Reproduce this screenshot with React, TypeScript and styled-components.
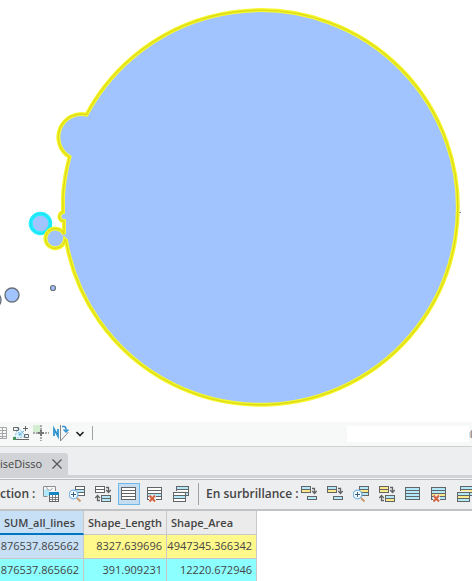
import React from 'react';
import styled, { createGlobalStyle } from 'styled-components';

const GlobalStyle = createGlobalStyle`
  * { box-sizing: border-box; }
  body {
    margin: 0;
    background: #fff;
    color: #444;
    font-family: 'Open Sans', 'Noto Sans', sans-serif;
    font-size: 12px;
    overflow: hidden;
  }
  button, input { font: inherit; color: inherit; }
`;

const Page = styled.main`
  display: flex;
  flex-direction: column;
`;

const MapView = styled.svg`
  display: block;
  width: 100%;
  height: auto;
`;

const StatusBar = styled.div`
  display: flex;
  align-items: center;
  height: 24px;
  background: #f7f8f8;
  overflow: hidden;
`;

const StatusTools = styled.div`
  display: flex;
  flex: 1;
  align-items: center;
  gap: 4px;
  padding-bottom: 2px;
`;

const IconButton = styled.button<{ $size?: number; $active?: boolean }>`
  display: flex;
  flex: none;
  align-items: center;
  justify-content: center;
  width: ${(p) => p.$size ?? 22}px;
  height: ${(p) => p.$size ?? 22}px;
  padding: 0;
  border: 1px solid ${(p) => (p.$active ? '#6cb8e8' : 'transparent')};
  background: ${(p) => (p.$active ? '#c5dcf1' : 'transparent')};

  svg { flex: none; display: block; }
`;

const Divider = styled.span<{ $height: number }>`
  flex: none;
  width: 1px;
  height: ${(p) => p.$height}px;
  background: #a0a1a3;
`;

const StatusField = styled.input`
  flex: none;
  width: 122px;
  height: 16px;
  padding: 0 4px;
  border: 0;
  background: #fff;
`;

const StatusEdge = styled.svg`
  flex: none;
  width: 3px;
  height: 16px;
`;

const TabStrip = styled.div`
  display: flex;
  align-items: flex-end;
  height: 29px;
  border-top: 1px solid #d0d1d3;
  background: #edeef0;
`;

const Tab = styled.div`
  display: flex;
  align-items: center;
  gap: 8px;
  height: 22px;
  padding-right: 4px;
  border-radius: 0 3px 0 0;
  background: #d1d3d6;
`;

const TabTitle = styled.button`
  padding: 0;
  border: 0;
  background: none;
  line-height: 20px;
  font-size: 11px;
`;

const PanelEdge = styled.div`
  height: 5px;
  border-top: 3px solid #d1d3d6;
  border-bottom: 1px solid #b9babd;
  background: #f5f5f6;
`;

const TableToolbar = styled.div`
  display: flex;
  align-items: center;
  gap: 4px;
  height: 31px;
  padding-bottom: 1px;
  border-bottom: 2px solid #c1c2c4;
  background: #edeef0;
  overflow: hidden;
`;

const ToolLabel = styled.span<{ $width: number }>`
  flex: none;
  width: ${(p) => p.$width}px;
  font-size: 12px;
  font-weight: 600;
  line-height: 20px;
  white-space: nowrap;
`;

const ToolDivider = styled(Divider)`
  margin: 0 3px 0 2px;
`;

const Table = styled.table`
  width: 257px;
  table-layout: fixed;
  border-collapse: separate;
  border-spacing: 0;
  font-size: 11px;
  line-height: 16px;
`;

const HeadCell = styled.th<{ $width: number; $sorted?: boolean }>`
  width: ${(p) => p.$width}px;
  height: 24px;
  padding: ${(p) => (p.$sorted ? 2 : 1)}px 0 0 4px;
  text-align: left;
  font-weight: 600;
  white-space: nowrap;
  background: ${(p) => (p.$sorted ? '#c8e0f6' : '#ebebeb')};
  border-right: 1px solid #c8c8c8;
  border-bottom: ${(p) => (p.$sorted ? '2px solid #0075c2' : '1px solid #c8c8c8')};
`;

const Cell = styled.td<{ $fill: string }>`
  height: 24px;
  padding: 0 4px 2px 0;
  text-align: right;
  background: ${(p) => p.$fill};
  border-right: 1px solid #c8c8c8;
  border-bottom: 1px solid #c8c8c8;
`;

const INK = '#626466';
const BLUE = '#b3e7fa';
const YELLOW = '#fbe88a';

type GridProps = { x?: number; y?: number; w?: number; h?: number; rows: string[] };

function Grid({ x = 0, y = 0, w = 14, h = 12, rows }: GridProps) {
  const step = h / rows.length;
  return (
    <g>
      {rows.map((fill, i) => (
        <rect key={i} x={x + 0.5} y={y + 0.5 + i * step} width={w} height={step} fill={fill} stroke={INK} />
      ))}
    </g>
  );
}

function Icon({ children }: { children: React.ReactNode }) {
  return (
    <svg width="16" height="16" viewBox="0 0 16 16" aria-hidden="true">
      {children}
    </svg>
  );
}

const AttributesIcon = () => (
  <Icon>
    <path d="M1 1h11v5H6v4H1z" fill="#f7f8f8" />
    <path d="M1 4l3-1 2 2v5H1z" fill={BLUE} />
    <path d="M.5.5h12V5M.5.5v10h4" fill="none" stroke="#8b8d8f" />
    <path d="M3.5 1l1 2.5 3 1L9.500 2" fill="none" stroke="#8b8d8f" strokeWidth=".8" />
    <rect x="6.5" y="6.5" width="9" height="9" fill="#fff" stroke={INK} />
    <path d="M6 6h10v3H6z" fill="#1683c5" />
    <path d="M7 11.500h8M7 13.500h8M9.500 9v6M12.500 9v6" stroke={INK} strokeWidth=".8" />
  </Icon>
);

const ZoomIcon = ({ alt }: { alt?: boolean }) => (
  <Icon>
    <Grid x={6} w={9} h={9} rows={alt ? [BLUE, YELLOW, BLUE] : ['#fff', BLUE, '#fff']} />
    <path d="M8 12l3.5 3.5" stroke="#c99b6d" strokeWidth="2" />
    <circle cx="4.5" cy="8.5" r="4.3" fill="#f3faff" stroke="#78b4e4" strokeWidth="1.3" />
    <path d="M2 8.5h5M4.5 6v5" stroke="#3e5f7c" />
  </Icon>
);

const SwitchIcon = ({ alt }: { alt?: boolean }) => (
  <Icon>
    <Grid w={9} h={6} rows={alt ? [YELLOW, YELLOW] : ['#fff', '#fff']} />
    <Grid x={6} y={9} w={9} h={6} rows={alt ? [BLUE, YELLOW] : [BLUE, BLUE]} />
    <path d="M11 1.5h2.5V6M11.2 4l2.3 2.5L15.8 4M5 14.5H2.5V10M.2 12l2.3-2.5L4.8 12" fill="none" stroke={INK} strokeWidth="1.3" />
  </Icon>
);

const RowsIcon = ({ fill }: { fill: string }) => (
  <Icon>
    <Grid y={1} h={12} rows={[fill, fill, fill, fill]} />
  </Icon>
);

const ClearIcon = ({ alt }: { alt?: boolean }) => (
  <Icon>
    <Grid y={1} rows={alt ? [BLUE, BLUE, YELLOW, BLUE] : ['#fff', '#fff', BLUE, '#fff']} />
    <path d="M2 9h7v7H2z" fill="#edeef0" />
    <path d="M2.5 9.5l5.5 6M8 9.5l-5.5 6" stroke="#d4633f" strokeWidth="2" />
  </Icon>
);

const StackIcon = ({ alt }: { alt?: boolean }) => (
  <Icon>
    <Grid x={3} w={12} h={9} rows={alt ? [BLUE, YELLOW, BLUE] : [BLUE, '#fff', BLUE]} />
    <path d="M0 5h13v11H0z" fill="#edeef0" />
    <Grid y={6} w={12} h={9} rows={alt ? [BLUE, YELLOW, BLUE] : ['#fff', BLUE, '#fff']} />
  </Icon>
);

const MoveIcon = () => (
  <Icon>
    <Grid w={9} h={6} rows={[BLUE, YELLOW]} />
    <Grid x={6} y={10} w={9} h={3} rows={[BLUE]} />
    <path d="M11 2.5h2.5V7M11.2 5l2.3 2.5L15.8 5" fill="none" stroke={INK} strokeWidth="1.3" />
  </Icon>
);

const TOOLS_SELECTION = [
  { label: 'Sélectionner par attributs', icon: <AttributesIcon /> },
  { label: 'Zoom sur la sélection', icon: <ZoomIcon /> },
  { label: 'Inverser la sélection', icon: <SwitchIcon /> },
  { label: 'Tout sélectionner', icon: <RowsIcon fill="#fff" />, active: true },
  { label: 'Effacer la sélection', icon: <ClearIcon /> },
  { label: 'Copier les lignes', icon: <StackIcon /> },
];

const TOOLS_HIGHLIGHT = [
  { label: 'Ligne suivante', icon: <MoveIcon /> },
  { label: 'Ligne précédente', icon: <MoveIcon /> },
  { label: 'Zoom sur la surbrillance', icon: <ZoomIcon alt /> },
  { label: 'Inverser la surbrillance', icon: <SwitchIcon alt /> },
  { label: 'Tout mettre en surbrillance', icon: <RowsIcon fill={BLUE} /> },
  { label: 'Effacer la surbrillance', icon: <ClearIcon alt /> },
  { label: 'Copier la surbrillance', icon: <StackIcon alt /> },
];

const ROWS = [
  { id: 1, values: ['876537.865662', '8327.639696', '4947345.366342'], fills: ['#c8e0f6', '#fff88b', '#fff88b'] },
  { id: 2, values: ['876537.865662', '391.909231', '12220.672946'], fills: ['#8cffff', '#8cffff', '#8cffff'] },
];

const OUTLINE =
  'M86.500 114.500A197.300 197.300 0 1 1 66 240.500L65 239.500A9.800 9.800 0 1 1 64 234L64 221C58 221 58 213 63 212L63 196A197 197 0 0 1 69.500 157A23.200 23.200 0 0 1 86.500 114.500Z';

function MapCanvas() {
  return (
    <MapView viewBox="0 0 472 422" role="img" aria-label="Carte">
      <circle cx="-7" cy="300" r="8" fill="#a1c4ff" stroke="#6a7079" strokeWidth="1.4" />
      <circle cx="12" cy="295" r="7" fill="#a1c4ff" stroke="#6a7079" strokeWidth="1.4" />
      <circle cx="53" cy="288" r="2.5" fill="#a1c4ff" stroke="#6a7079" strokeWidth="1.2" />
      <circle cx="40.5" cy="223.5" r="9.8" fill="#a1c4ff" stroke="#27efff" strokeWidth="4" />
      <circle cx="40.5" cy="223.5" r="9.8" fill="none" stroke="#19dceb" />
      <path d="M459 212.5h2" stroke="#777" />
      <path d={OUTLINE} fill="#a1c4ff" stroke="#f7f731" strokeWidth="4" />
      <path d={OUTLINE} fill="none" stroke="#dcdc16" strokeWidth="1.4" />
    </MapView>
  );
}

export default function App() {
  return (
    <Page>
      <GlobalStyle />
      <MapCanvas />
      <StatusBar>
        <StatusTools>
          <svg width="9" height="16" viewBox="0 0 9 16" aria-hidden="true">
            <path d="M0 2.5h6.5v11H0M0 5.5h6M0 8.5h6M0 11.5h6M2.5 2v12" fill="none" stroke="#a5a6a7" />
          </svg>
          <IconButton $size={16} aria-label="Capture">
            <Icon>
              <path d="M1.5 13L5 2.5l8 9-11.5 2" fill="#e4f5fd" stroke="#81bde0" strokeDasharray="2 1" />
              <path d="M.5 2.5h5v3h-5zM11.5 9.5h4v3h-4zM3 14.5h13M10 3.5h5M12.5 1v5" fill="none" stroke="#666" />
              <path d="M6 10l5-4M6 7v3h3" fill="none" stroke="#5aaee2" />
              <path d="M0 12h3v3H0z" fill="#429454" />
            </Icon>
          </IconButton>
          <IconButton $size={16} aria-label="Grille">
            <Icon>
              <path d="M0 0h8v8H0z" fill="#d2edd0" />
              <path d="M0 8h16M8 0v16" stroke="#aaa" strokeWidth="2" strokeDasharray="2 1" />
              <path d="M5 8h6M8 5v6" stroke="#777" strokeWidth="2" />
            </Icon>
          </IconButton>
          <IconButton $size={16} aria-label="Orientation nord">
            <Icon>
              <path d="M1 11V4l4 7V4" fill="none" stroke="#3295cf" strokeWidth="1.8" />
              <path d="M7.5 0v16l8-9" fill="none" stroke="#888" />
              <path d="M9 1.5h2q2 0 2 3V6M10.5 4.5L13 7l2.5-2.5" fill="none" stroke="#3295cf" strokeWidth="1.5" />
            </Icon>
          </IconButton>
          <IconButton $size={15} aria-label="Plus d’options">
            <svg width="12" height="8" viewBox="0 0 12 8" aria-hidden="true">
              <path d="M1.500 3l3.500 3.500L8.500 3" fill="none" stroke="#222" strokeWidth="1.6" />
            </svg>
          </IconButton>
          <Divider $height={14} />
        </StatusTools>
        <StatusField aria-label="Coordonnées" />
        <StatusEdge viewBox="0 0 3 16" aria-hidden="true">
          <path d="M1 6v5" stroke="#8cd5f5" />
          <path d="M2 5v7" stroke="#e29b60" />
          <path d="M3 4v8" stroke="#526287" />
        </StatusEdge>
      </StatusBar>
      <TabStrip>
        <Tab>
          <TabTitle>iseDisso</TabTitle>
          <IconButton $size={14} aria-label="Fermer">
            <svg width="10" height="10" viewBox="0 0 10 10" aria-hidden="true">
              <path d="M.5.5l9 9M9.5.5l-9 9" stroke="#555" strokeWidth="1.2" />
            </svg>
          </IconButton>
        </Tab>
      </TabStrip>
      <PanelEdge />
      <TableToolbar>
        <ToolLabel $width={36}>ction :</ToolLabel>
        {TOOLS_SELECTION.map((t) => (
          <IconButton key={t.label} $active={t.active} aria-label={t.label}>
            {t.icon}
          </IconButton>
        ))}
        <ToolDivider $height={22} />
        <ToolLabel $width={88}>En surbrillance :</ToolLabel>
        {TOOLS_HIGHLIGHT.map((t) => (
          <IconButton key={t.label} aria-label={t.label}>
            {t.icon}
          </IconButton>
        ))}
      </TableToolbar>
      <Table>
        <thead>
          <tr>
            <HeadCell $width={84} $sorted>SUM_all_lines</HeadCell>
            <HeadCell $width={83}>Shape_Length</HeadCell>
            <HeadCell $width={90}>Shape_Area</HeadCell>
          </tr>
        </thead>
        <tbody>
          {ROWS.map((row) => (
            <tr key={row.id}>
              {row.values.map((value, i) => (
                <Cell key={i} $fill={row.fills[i]}>{value}</Cell>
              ))}
            </tr>
          ))}
        </tbody>
      </Table>
    </Page>
  );
}
